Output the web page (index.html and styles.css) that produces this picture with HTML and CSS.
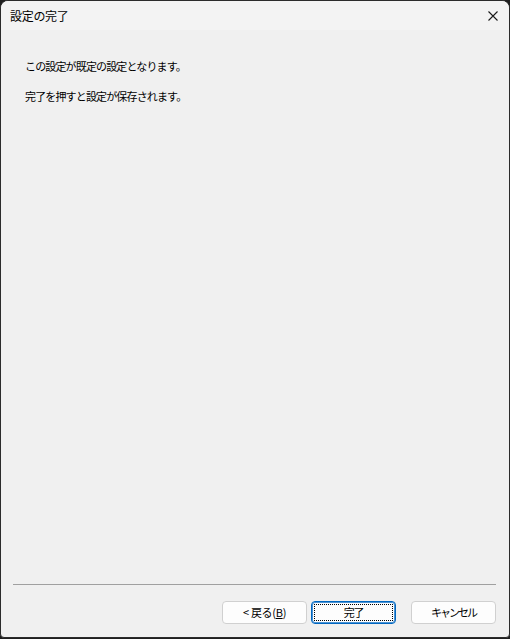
FILE: index.html
```html
<!DOCTYPE html>
<html lang="ja">
<head>
<meta charset="utf-8">
<title>設定の完了</title>
<link rel="stylesheet" href="styles.css">
</head>
<body>
<div class="window">
  <div class="titlebar">
    <span class="title">設定の完了</span>
    <span class="close">
      <svg width="10" height="10" viewBox="0 0 10 10"><path d="M0.5 0.5 L9.5 9.5 M9.5 0.5 L0.5 9.5" stroke="#1a1a1a" stroke-width="1.1" fill="none"/></svg>
    </span>
  </div>
  <div class="content">
    <p class="line">この設定が既定の設定となります。</p>
    <p class="line">完了を押すと設定が保存されます。</p>
  </div>
  <div class="footer">
    <div class="separator"></div>
    <div class="buttons">
      <button class="btn btn-back">&lt;&nbsp;戻る(<u>B</u>)</button>
      <button class="btn btn-default">完了</button>
      <button class="btn btn-cancel">キャンセル</button>
    </div>
  </div>
</div>
</body>
</html>
```
FILE: styles.css
```css
html, body {
  margin: 0;
  padding: 0;
  background: #1f1f1f;
}
body {
  width: 510px;
  height: 639px;
  overflow: hidden;
  font-family: "Noto Sans CJK JP", "Noto Sans", sans-serif;
  color: #000;
}
.window {
  box-sizing: border-box;
  width: 510px;
  height: 638px;
  border: 1px solid #2b2b2b;
  border-radius: 8px 8px 4px 4px;
  background: #f0f0f0;
  display: flex;
  flex-direction: column;
  overflow: hidden;
}
.titlebar {
  height: 29px;
  flex: none;
  background: #f3f3f3;
  display: flex;
  align-items: center;
  justify-content: space-between;
  padding-left: 9px;
  padding-right: 10px;
}
.title {
  font-size: 12px;
  letter-spacing: -0.3px;
  line-height: 16px;
}
.close {
  display: flex;
  width: 10px;
  height: 10px;
  margin-right: 1px;
}
.content {
  flex: 1;
  padding: 26px 0 0 24px;
}
.line {
  margin: 0 0 10px 0;
  font-size: 11px;
  letter-spacing: -0.85px;
  line-height: 20px;
}
.footer {
  flex: none;
}
.separator {
  height: 1px;
  background: #a0a0a0;
  margin: 0 13px 0 12px;
}
.buttons {
  display: flex;
  justify-content: flex-end;
  padding: 16px 13px 13px 0;
  gap: 4px;
}
.btn {
  box-sizing: border-box;
  width: 85px;
  height: 23px;
  padding: 0 0 1px 0;
  border: 1px solid #d0d0d0;
  border-radius: 4px;
  background: #fdfdfd;
  font-family: "Noto Sans CJK JP", "Noto Sans", sans-serif;
  font-size: 11px;
  letter-spacing: -1.2px;
  line-height: 19px;
  color: #000;
  position: relative;
}
.btn u {
  text-underline-offset: 1px;
}
.btn-back {
  letter-spacing: -0.3px;
}
.btn-default {
  border-color: #0067c0;
  box-shadow: inset 0 0 0 1px #4c93d4;
}
.btn-default::after {
  content: "";
  position: absolute;
  left: 2px;
  top: 2px;
  right: 2px;
  bottom: 2px;
  border: 1px dotted #000;
}
.btn-cancel {
  margin-left: 11px;
  letter-spacing: -2px;
}
```
